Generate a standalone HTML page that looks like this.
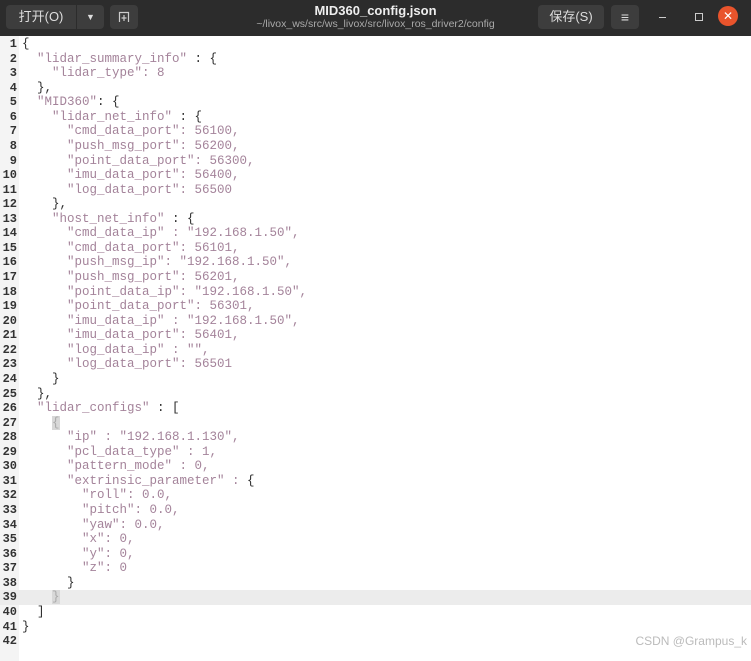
<!DOCTYPE html>
<html><head><meta charset="utf-8"><style>
body{margin:0;width:751px;height:661px;overflow:hidden;background:#fff;font-family:"Liberation Sans","Noto Sans CJK SC",sans-serif}
.bar{position:absolute;left:0;top:0;width:751px;height:36px;background:#2c2c2c;color:#ddd}
.btn{position:absolute;top:5px;height:24px;background:#3d3d3d;border-radius:4px;color:#ddd;font-size:13px;line-height:24px;text-align:center}
.title{position:absolute;left:0;width:751px;text-align:center;top:3px;font-size:13px;font-weight:bold;color:#eee}
.sub{position:absolute;left:0;width:751px;text-align:center;top:18px;font-size:10.5px;color:#aaa}
.gut{position:absolute;left:0;top:36px;width:19px;height:625px;background:#f4f4f4}
.hl{position:absolute;left:0;top:590px;width:751px;height:15px;background:#ececec}
pre{position:absolute;margin:0;top:37px;font-family:"Liberation Mono",monospace;font-size:12.5px;line-height:14.56px}
.n{left:0;width:17px;text-align:right;font-weight:bold;color:#333;font-size:12px}
.c{left:22px;color:#2e2e2e}
.s{color:#a4839a}
.b{background:#d8d8d8;color:#aaa}
</style></head><body>
<div class="bar">
<div class="btn" style="left:6px;width:70px;border-radius:4px 0 0 4px">打开(O)</div>
<div class="btn" style="left:77px;width:27px;border-radius:0 4px 4px 0;font-size:9px">▼</div>
<div class="btn" style="left:110px;width:28px"><svg width="12" height="12" viewBox="0 0 12 12" style="margin-top:6px"><path d="M1.5 11V1.5h9V11M6 4v6M3.5 7h5" stroke="#ccc" fill="none" stroke-width="1.2"/></svg></div>
<div class="title">MID360_config.json</div>
<div class="sub">~/livox_ws/src/ws_livox/src/livox_ros_driver2/config</div>
<div class="btn" style="left:538px;width:66px">保存(S)</div>
<div class="btn" style="left:611px;width:28px;font-size:14px">≡</div>
<div style="position:absolute;left:659px;top:17px;width:7px;height:1px;background:#ccc"></div>
<div style="position:absolute;left:695px;top:13px;width:6px;height:6px;border:1px solid #ccc"></div>
<div style="position:absolute;left:718px;top:6px;width:20px;height:20px;border-radius:50%;background:#e9542c;color:#fff;font-size:12px;line-height:20px;text-align:center">✕</div>
</div>
<div class="gut"></div>
<div class="hl"></div>
<pre class="n">1
2
3
4
5
6
7
8
9
10
11
12
13
14
15
16
17
18
19
20
21
22
23
24
25
26
27
28
29
30
31
32
33
34
35
36
37
38
39
40
41
42</pre>
<pre class="c">{
  <span class="s">"lidar_summary_info"</span> : {
    <span class="s">"lidar_type": 8</span>
  },
  <span class="s">"MID360"</span>: {
    <span class="s">"lidar_net_info"</span> : {
      <span class="s">"cmd_data_port": 56100,</span>
      <span class="s">"push_msg_port": 56200,</span>
      <span class="s">"point_data_port": 56300,</span>
      <span class="s">"imu_data_port": 56400,</span>
      <span class="s">"log_data_port": 56500</span>
    },
    <span class="s">"host_net_info"</span> : {
      <span class="s">"cmd_data_ip" : "192.168.1.50",</span>
      <span class="s">"cmd_data_port": 56101,</span>
      <span class="s">"push_msg_ip": "192.168.1.50",</span>
      <span class="s">"push_msg_port": 56201,</span>
      <span class="s">"point_data_ip": "192.168.1.50",</span>
      <span class="s">"point_data_port": 56301,</span>
      <span class="s">"imu_data_ip" : "192.168.1.50",</span>
      <span class="s">"imu_data_port": 56401,</span>
      <span class="s">"log_data_ip" : "",</span>
      <span class="s">"log_data_port": 56501</span>
    }
  },
  <span class="s">"lidar_configs"</span> : [
    <span class="b">{</span>
      <span class="s">"ip" : "192.168.1.130",</span>
      <span class="s">"pcl_data_type" : 1,</span>
      <span class="s">"pattern_mode" : 0,</span>
      <span class="s">"extrinsic_parameter" :</span> {
        <span class="s">"roll": 0.0,</span>
        <span class="s">"pitch": 0.0,</span>
        <span class="s">"yaw": 0.0,</span>
        <span class="s">"x": 0,</span>
        <span class="s">"y": 0,</span>
        <span class="s">"z": 0</span>
      }
    <span class="b">}</span>
  ]
}
</pre>
<div style="position:absolute;right:4px;top:634px;font-size:12px;color:#bbb">CSDN @Grampus_k</div>
</body></html>
